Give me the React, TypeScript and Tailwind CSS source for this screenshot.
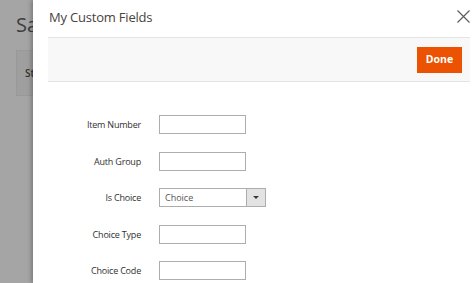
const FIELDS = [
  { label: "Item Number", type: "text" },
  { label: "Auth Group", type: "text" },
  { label: "Is Choice", type: "select" },
  { label: "Choice Type", type: "text" },
  { label: "Choice Code", type: "text" },
];

export default function App() {
  return (
    <div
      className="w-[474px] h-[283px] overflow-hidden flex bg-[#a5a5a5]"
      style={{ fontFamily: '"Open Sans", "Noto Sans", sans-serif' }}
    >
      {/* Page behind the overlay */}
      <div className="w-[33px] shrink-0 relative">
        <div className="absolute left-[16px] top-[15px] text-[20px] leading-none text-[#3d3d3d]">Sa</div>
        <div className="absolute left-[16px] top-[50px] w-[30px] h-[46px] bg-[#9f9f9f] border border-[#999] flex items-center pl-[8px]">
          <span className="text-[10px] font-semibold text-[#333]">St</span>
        </div>
      </div>

      {/* Modal */}
      <div className="flex-1 bg-white relative shadow-[-2px_0_4px_rgba(0,0,0,0.25)] flex flex-col">
        <div className="h-[37px] flex items-start justify-between pl-[16px] pr-[4px]">
          <h1 className="text-[13px] text-[#4a423d] mt-[8px] tracking-[-0.2px]">My Custom Fields</h1>
          <button className="mt-[10px] text-[#5a5a5a]">
            <svg width="13" height="13" viewBox="0 0 13 13" fill="none" stroke="currentColor" strokeWidth="1.1">
              <path d="M0.5 0.5 12.5 12.5 M12.5 0.5 0.5 12.5" />
            </svg>
          </button>
        </div>

        {/* Action bar */}
        <div className="ml-[15px] mr-[4px] h-[45px] bg-[#f8f8f8] border-y border-[#e4e4e4] flex items-center justify-end pr-[8px]">
          <button className="w-[45px] h-[26px] bg-[#eb5202] text-white text-[10.5px] font-bold">Done</button>
        </div>

        {/* Form */}
        <div className="mt-[33px] flex flex-col gap-[17px]">
          {FIELDS.map(f => (
            <div key={f.label} className="flex items-center h-[19.5px]">
              <label className="w-[108px] text-right text-[9px] tracking-[-0.2px] font-medium text-[#303030]">{f.label}</label>
              {f.type === "select" ? (
                <div className="ml-[18px] w-[107px] h-[19px] border border-[#adadad] flex">
                  <span className="flex-1 text-[9px] text-[#555] pl-[5px] leading-[17px]">Choice</span>
                  <span className="w-[19px] bg-[#e3e3e3] border-l border-[#adadad] flex items-center justify-center">
                    <span className="w-0 h-0 border-l-[3px] border-r-[3px] border-t-[3px] border-l-transparent border-r-transparent border-t-[#41362f]" />
                  </span>
                </div>
              ) : (
                <input className="ml-[18px] w-[87px] h-[19px] border border-[#adadad] bg-white" />
              )}
            </div>
          ))}
        </div>
      </div>
    </div>
  );
}
